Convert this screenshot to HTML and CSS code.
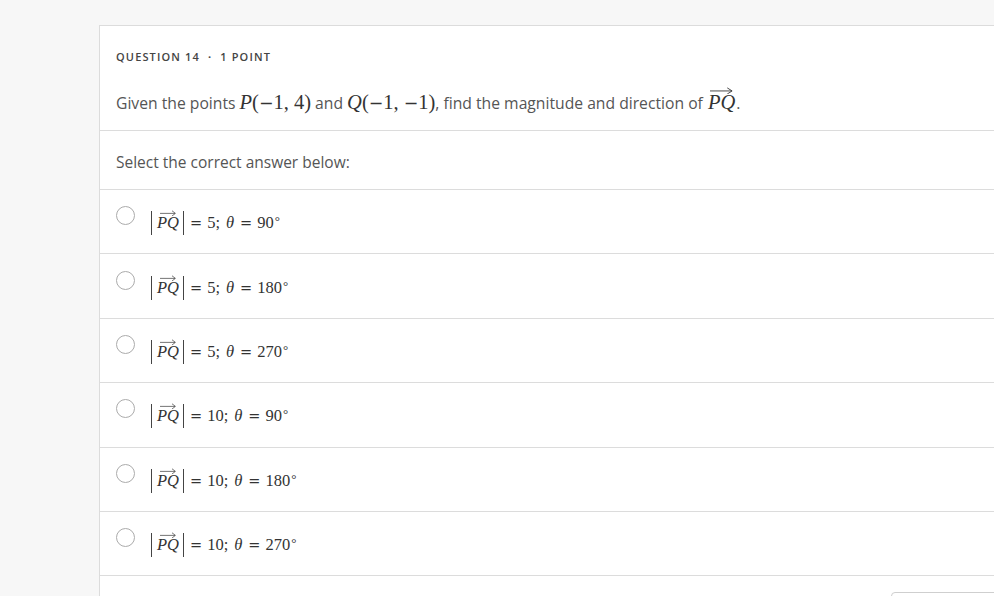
FILE: index.html
```html
<!DOCTYPE html>
<html>
<head>
<meta charset="utf-8">
<link rel="stylesheet" href="styles.css">
</head>
<body>
<div class="card">
  <div class="q-head">
    <div class="q-label"><span>Question 14</span><span class="sep">·</span><span>1 point</span></div>
    <p class="q-text">Given the points <span class="m m-lg"><i>P</i>(<span class="op">−</span>1,<span class="thin"></span>4)</span> and <span class="m m-lg"><i>Q</i>(<span class="op">−</span>1,<span class="thin"></span><span class="op">−</span>1)</span>, find the magnitude and direction of <span class="m m-lg"><span class="vec vec-lg"><svg class="arrow" viewBox="0 0 26 8" preserveAspectRatio="none"><path d="M0 4.5 H24.5 M19.5 1 L25 4.5 L19.5 8" fill="none" stroke="#333" stroke-width="1"/></svg><i>PQ</i></span></span>.</p>
  </div>
  <div class="prompt">Select the correct answer below:</div>
  <ul class="options">
    <li class="opt"><span class="radio"></span><span class="m m-sm"><span class="bar"></span><span class="vec"><svg class="arrow" viewBox="0 0 26 8" preserveAspectRatio="none"><path d="M0 4.5 H24.5 M19.5 1 L25 4.5 L19.5 8" fill="none" stroke="#333" stroke-width="1"/></svg><i>PQ</i></span><span class="bar"></span><span class="rel">=</span>5;<span class="sp"></span><i>θ</i><span class="rel">=</span>90<span class="deg">°</span></span></li>
    <li class="opt"><span class="radio"></span><span class="m m-sm"><span class="bar"></span><span class="vec"><svg class="arrow" viewBox="0 0 26 8" preserveAspectRatio="none"><path d="M0 4.5 H24.5 M19.5 1 L25 4.5 L19.5 8" fill="none" stroke="#333" stroke-width="1"/></svg><i>PQ</i></span><span class="bar"></span><span class="rel">=</span>5;<span class="sp"></span><i>θ</i><span class="rel">=</span>180<span class="deg">°</span></span></li>
    <li class="opt"><span class="radio"></span><span class="m m-sm"><span class="bar"></span><span class="vec"><svg class="arrow" viewBox="0 0 26 8" preserveAspectRatio="none"><path d="M0 4.5 H24.5 M19.5 1 L25 4.5 L19.5 8" fill="none" stroke="#333" stroke-width="1"/></svg><i>PQ</i></span><span class="bar"></span><span class="rel">=</span>5;<span class="sp"></span><i>θ</i><span class="rel">=</span>270<span class="deg">°</span></span></li>
    <li class="opt"><span class="radio"></span><span class="m m-sm"><span class="bar"></span><span class="vec"><svg class="arrow" viewBox="0 0 26 8" preserveAspectRatio="none"><path d="M0 4.5 H24.5 M19.5 1 L25 4.5 L19.5 8" fill="none" stroke="#333" stroke-width="1"/></svg><i>PQ</i></span><span class="bar"></span><span class="rel">=</span>10;<span class="sp"></span><i>θ</i><span class="rel">=</span>90<span class="deg">°</span></span></li>
    <li class="opt"><span class="radio"></span><span class="m m-sm"><span class="bar"></span><span class="vec"><svg class="arrow" viewBox="0 0 26 8" preserveAspectRatio="none"><path d="M0 4.5 H24.5 M19.5 1 L25 4.5 L19.5 8" fill="none" stroke="#333" stroke-width="1"/></svg><i>PQ</i></span><span class="bar"></span><span class="rel">=</span>10;<span class="sp"></span><i>θ</i><span class="rel">=</span>180<span class="deg">°</span></span></li>
    <li class="opt"><span class="radio"></span><span class="m m-sm"><span class="bar"></span><span class="vec"><svg class="arrow" viewBox="0 0 26 8" preserveAspectRatio="none"><path d="M0 4.5 H24.5 M19.5 1 L25 4.5 L19.5 8" fill="none" stroke="#333" stroke-width="1"/></svg><i>PQ</i></span><span class="bar"></span><span class="rel">=</span>10;<span class="sp"></span><i>θ</i><span class="rel">=</span>270<span class="deg">°</span></span></li>
  </ul>
  <div class="footer"><span class="btn"></span></div>
</div>
</body>
</html>
```
FILE: styles.css
```css
html, body {
  margin: 0;
  padding: 0;
  background: #f7f7f7;
  overflow: hidden;
  width: 994px;
  height: 596px;
}
body {
  font-family: "Open Sans", "Liberation Sans", sans-serif;
  color: #555;
}
.card {
  margin: 25px 0 0 99px;
  width: 895px;
  height: 570px;
  overflow: hidden;
  background: #fff;
  border: 1px solid #dcdcdc;
  border-right: none;
  border-bottom: none;
}
.q-head {
  padding: 23px 16px 15px;
  border-bottom: 1px solid #dcdcdc;
}
.q-label {
  font-size: 11px;
  line-height: 16px;
  font-weight: 600;
  letter-spacing: 1.15px;
  text-transform: uppercase;
  color: #444;
}
.q-label .sep {
  margin: 0 8px;
  font-weight: 700;
}
.q-text {
  margin: 22px 0 0;
  font-size: 15.7px;
  line-height: 24px;
  color: #555;
}
.m {
  font-family: "Liberation Serif", "Times New Roman", serif;
  color: #333;
  white-space: nowrap;
}
.m i {
  font-style: italic;
}
.m-lg {
  font-size: 20.5px;
}
.m-sm {
  font-size: 16.5px;
}
.op {
  font-family: "DejaVu Serif", serif;
  font-size: 0.85em;
}
.thin {
  display: inline-block;
  width: 5px;
}
.vec {
  display: inline-block;
  text-align: center;
  line-height: 1;
}
.vec .arrow {
  display: block;
  width: 16px;
  height: 6px;
  margin: 0 auto -1px;
}
.vec-lg .arrow {
  width: 23px;
  height: 7px;
  margin-bottom: -2px;
}
.vec-lg {
  padding: 0 1px;
}
.m-sm .vec {
  padding: 0 4px 0 5px;
}
.prompt {
  padding: 21px 16px 17px;
  font-size: 15.5px;
  line-height: 20px;
  color: #555;
  border-bottom: 1px solid #dcdcdc;
}
.options {
  list-style: none;
  margin: 0;
  padding: 0;
}
.opt {
  display: flex;
  align-items: center;
  gap: 16px;
  height: 63.4px;
  padding-left: 16px;
  border-bottom: 1px solid #dcdcdc;
}
.radio {
  flex: none;
  width: 17px;
  height: 17px;
  border: 1px solid #ababab;
  border-radius: 50%;
  background: #fff;
  margin-bottom: 12px;
}
.opt .m {
  margin-top: 2px;
}
.bar {
  display: inline-block;
  width: 1px;
  height: 24px;
  background: #444;
  vertical-align: -7px;
}
.rel {
  font-family: "DejaVu Serif", serif;
  font-size: 14.5px;
  margin: 0 5px 0 6px;
}
.sp {
  display: inline-block;
  width: 6px;
}
.deg {
  font-size: 13px;
  vertical-align: 3px;
  margin-left: 1px;
}
.footer {
  padding: 16px 0 0 791px;
}
.btn {
  display: block;
  width: 160px;
  height: 40px;
  border: 1px solid #cfcfcf;
  border-radius: 4px;
  background: #fff;
}
```
